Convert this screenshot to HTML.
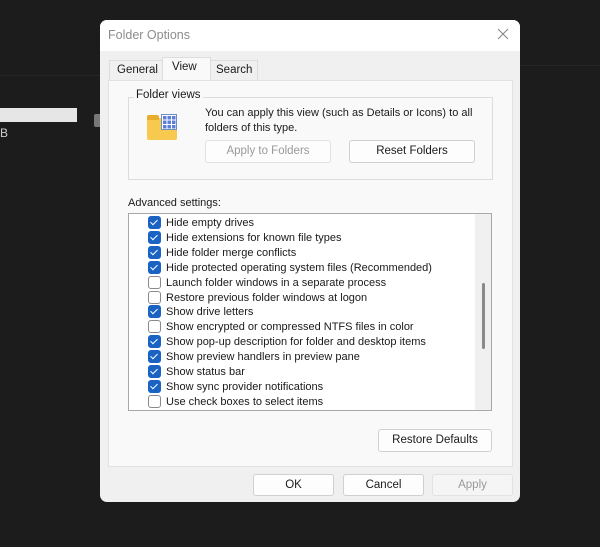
<!DOCTYPE html>
<html><head><style>
body{margin:0;width:600px;height:547px;background:#1c1c1c;position:relative;overflow:hidden;font-family:"Liberation Sans",sans-serif;font-size:11px;color:#1a1a1a}
.a{position:absolute}
.btn{position:absolute;background:#fdfdfd;border:1px solid #d0d0d0;border-radius:3px;text-align:center;box-sizing:border-box;color:#1a1a1a;font-size:11.5px}
.cb{position:absolute;left:148px;width:13px;height:13px;border-radius:3px;box-sizing:border-box}
.on{background:#1a63c2}
.on:after{content:"";position:absolute;left:4px;top:1.5px;width:3px;height:6px;border:solid #fff;border-width:0 1.5px 1.5px 0;transform:rotate(45deg)}
.off{background:#fff;border:1px solid #8a8a8a}
.t{position:absolute;left:166px;white-space:nowrap;margin-top:1px}
</style></head><body>
<div class="a" style="left:0;top:75px;width:100px;height:1px;background:#262626"></div>
<div class="a" style="left:520px;top:65px;width:80px;height:1px;background:#262626"></div>
<div class="a" style="left:0;top:108px;width:77px;height:14px;background:#e6e6e6"></div>
<div class="a" style="left:0;top:126px;color:#ccc;font-size:12px">B</div>
<div class="a" style="left:94px;top:114px;width:8px;height:13px;background:#777;border-radius:2px"></div>
<div class="a" style="left:100px;top:20px;width:420px;height:482px;background:#f0f0f0;border-radius:7px;overflow:hidden">
 <div class="a" style="left:0;top:0;width:420px;height:31px;background:#fff"></div>
 <div class="a" style="left:8px;top:8px;color:#8c8c8c;font-size:12.5px">Folder Options</div>
 <svg class="a" style="left:397px;top:8px" width="12" height="12"><path d="M1 1L11 11M11 1L1 11" stroke="#888" stroke-width="1.1"/></svg>
 <div class="a" style="left:9px;top:40px;width:52px;height:20px;background:#f0f0f0;border:1px solid #ddd;border-bottom:none"></div>
 <div class="a" style="left:17px;top:44px;font-size:11.5px">General</div>
 <div class="a" style="left:62px;top:37px;width:47px;height:24px;background:#f9f9f9;border:1px solid #ddd;border-bottom:none"></div>
 <div class="a" style="left:72px;top:41px;font-size:11.5px">View</div>
 <div class="a" style="left:110px;top:40px;width:46px;height:20px;border:1px solid #ddd;border-bottom:none"></div>
 <div class="a" style="left:116px;top:44px;font-size:11.5px">Search</div>
 <div class="a" style="left:8px;top:60px;width:403px;height:385px;background:#f9f9f9;border:1px solid #e2e2e2"></div>
 <div class="a" style="left:28px;top:77px;width:363px;height:81px;border:1px solid #dcdcdc"></div>
 <div class="a" style="left:34px;top:69px;background:#f9f9f9;padding:0 2px;font-size:11.5px">Folder views</div>
 <div class="a" style="left:47px;top:98px;width:30px;height:22px;background:#f7c94e;border-radius:2px"></div>
 <div class="a" style="left:47px;top:95px;width:12px;height:5px;background:#e7ad2b;border-radius:2px 2px 0 0"></div>
 <div class="a" style="left:61px;top:94px;width:16px;height:16px;background:#fff;border:1px solid #6a8fc0;box-sizing:border-box;background-image:linear-gradient(90deg,#fff 1px,transparent 1px),linear-gradient(#fff 1px,transparent 1px);background-size:4.5px 4.5px;background-color:#5b7fd6"></div>
 <div class="a" style="left:105px;top:86px;line-height:15px">You can apply this view (such as Details or Icons) to all<br>folders of this type.</div>
 <div class="btn" style="left:105px;top:120px;width:126px;height:23px;line-height:21px;color:#999;border-color:#e2e2e2">Apply to Folders</div>
 <div class="btn" style="left:249px;top:120px;width:126px;height:23px;line-height:21px">Reset Folders</div>
 <div class="a" style="left:28px;top:177px">Advanced settings:</div>
 <div class="a" style="left:28px;top:193px;width:364px;height:198px;background:#fff;border:1px solid #a8a8a8;box-sizing:border-box;overflow:hidden">
  <div class="a" style="right:0;top:0;width:16px;height:198px;background:#f0f0f0"></div>
  <div class="a" style="right:6px;top:69px;width:3px;height:66px;background:#8a8a8a;border-radius:2px"></div>
 </div>
</div>
<div style="position:absolute;left:0;top:0">
<div class="cb on" style="top:216px"></div><div class="t" style="top:216px">Hide empty drives</div>
<div class="cb on" style="top:231px"></div><div class="t" style="top:231px">Hide extensions for known file types</div>
<div class="cb on" style="top:246px"></div><div class="t" style="top:246px">Hide folder merge conflicts</div>
<div class="cb on" style="top:261px"></div><div class="t" style="top:261px">Hide protected operating system files (Recommended)</div>
<div class="cb off" style="top:276px"></div><div class="t" style="top:276px">Launch folder windows in a separate process</div>
<div class="cb off" style="top:291px"></div><div class="t" style="top:291px">Restore previous folder windows at logon</div>
<div class="cb on" style="top:305px"></div><div class="t" style="top:305px">Show drive letters</div>
<div class="cb off" style="top:320px"></div><div class="t" style="top:320px">Show encrypted or compressed NTFS files in color</div>
<div class="cb on" style="top:335px"></div><div class="t" style="top:335px">Show pop-up description for folder and desktop items</div>
<div class="cb on" style="top:350px"></div><div class="t" style="top:350px">Show preview handlers in preview pane</div>
<div class="cb on" style="top:365px"></div><div class="t" style="top:365px">Show status bar</div>
<div class="cb on" style="top:380px"></div><div class="t" style="top:380px">Show sync provider notifications</div>
<div class="cb off" style="top:395px"></div><div class="t" style="top:395px">Use check boxes to select items</div>
</div>
<div class="btn" style="left:378px;top:429px;width:114px;height:23px;line-height:21px">Restore Defaults</div>
<div class="btn" style="left:253px;top:474px;width:81px;height:22px;line-height:20px">OK</div>
<div class="btn" style="left:343px;top:474px;width:81px;height:22px;line-height:20px">Cancel</div>
<div class="btn" style="left:432px;top:474px;width:81px;height:22px;line-height:20px;color:#999;background:#f5f5f5;border-color:#e2e2e2">Apply</div>
</body></html>
